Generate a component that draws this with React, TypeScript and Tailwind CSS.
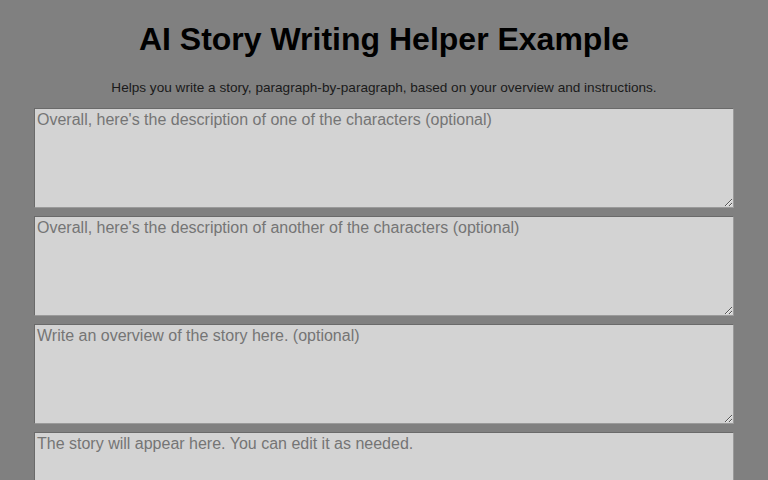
import React from "react";

export default function App() {
  const areas = [
    "Overall, here's the description of one of the characters (optional)",
    "Overall, here's the description of another of the characters (optional)",
    "Write an overview of the story here. (optional)",
    "The story will appear here. You can edit it as needed.",
  ];
  return (
    <div
      className="min-h-screen bg-[#808080] pb-8"
      style={{ fontFamily: '"Liberation Sans", Arial, sans-serif' }}
    >
      <h1 className="pt-[21px] text-center text-[32px] font-bold leading-[37px] text-[#000]">
        AI Story Writing Helper Example
      </h1>
      <p className="mt-[22px] text-center text-[13.6px] leading-[15px] text-[#1a1a1a]">
        Helps you write a story, paragraph-by-paragraph, based on your overview and instructions.
      </p>
      <div className="mt-[13px] flex flex-col items-center gap-2">
        {areas.map((p) => (
          <textarea
            key={p}
            placeholder={p}
            className="block h-[100px] w-[700px] resize-y border border-t-[#6a6a6a] border-l-[#6a6a6a] border-b-[#9a9a9a] border-r-[#9a9a9a] bg-[#d3d3d3] p-[2px] text-[16px] leading-[18px] text-black placeholder:text-[#757575] outline-none"
            style={{ fontFamily: '"Liberation Sans", Arial, sans-serif' }}
          />
        ))}
      </div>
    </div>
  );
}
